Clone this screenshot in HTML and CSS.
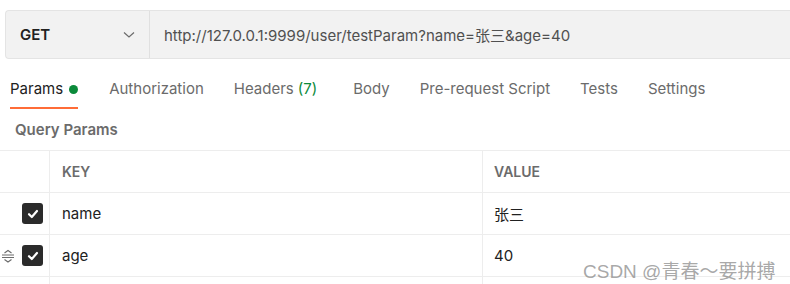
FILE: index.html
```html
<!DOCTYPE html>
<html>
<head>
<meta charset="utf-8">
<link rel="stylesheet" href="styles.css">
</head>
<body>
<div class="page">
  <div class="urlbar">
    <div class="method">
      <span class="method-name">GET</span>
      <svg class="chev" width="12" height="8" viewBox="0 0 12 8"><path d="M1 1.5 L6 6 L11 1.5" fill="none" stroke="#6b6b6b" stroke-width="1.2"/></svg>
    </div>
    <div class="url">http://127.0.0.1:9999/user/testParam?name=张三&amp;age=40</div>
  </div>

  <div class="tabs">
    <div class="tab active">Params <span class="dot"></span></div>
    <div class="tab">Authorization</div>
    <div class="tab wide">Headers <span class="count">(7)</span></div>
    <div class="tab">Body</div>
    <div class="tab">Pre-request Script</div>
    <div class="tab">Tests</div>
    <div class="tab">Settings</div>
  </div>

  <div class="section-title">Query Params</div>

  <div class="table">
    <div class="row head">
      <div class="c-check"></div>
      <div class="c-key">KEY</div>
      <div class="c-val">VALUE</div>
    </div>
    <div class="row">
      <div class="c-check"><span class="cb"><svg width="14" height="14" viewBox="0 0 14 14"><path d="M3 7.2 L5.8 10 L11 4" fill="none" stroke="#fff" stroke-width="2.2" stroke-linecap="round" stroke-linejoin="round"/></svg></span></div>
      <div class="c-key">name</div>
      <div class="c-val">张三</div>
    </div>
    <div class="row">
      <div class="c-check">
        <svg class="drag" width="14" height="14" viewBox="0 0 14 14"><path d="M3.5 4 L7 1.5 L10.5 4 M1 6 H13 M1 8.5 H13 M3.5 10.5 L7 13 L10.5 10.5" fill="none" stroke="#6b6b6b" stroke-width="1.1"/></svg>
        <span class="cb"><svg width="14" height="14" viewBox="0 0 14 14"><path d="M3 7.2 L5.8 10 L11 4" fill="none" stroke="#fff" stroke-width="2.2" stroke-linecap="round" stroke-linejoin="round"/></svg></span>
      </div>
      <div class="c-key">age</div>
      <div class="c-val">40</div>
    </div>
    <div class="row empty">
      <div class="c-check"></div>
      <div class="c-key"></div>
      <div class="c-val"></div>
    </div>
  </div>

  <div class="watermark">CSDN @青春～要拼搏</div>
</div>
</body>
</html>
```
FILE: styles.css
```css
html, body {
  margin: 0;
  padding: 0;
  background: #ffffff;
}
body {
  font-family: Inter, "Noto Sans CJK SC", sans-serif;
  font-size: 15px;
  color: #212121;
  width: 790px;
  height: 284px;
  overflow: hidden;
}
.page {
  position: relative;
  height: 284px;
}
.urlbar {
  display: flex;
  margin: 10px 0 0 5px;
  height: 47px;
  background: #f2f2f2;
  border: 1px solid #e4e4e4;
  border-right: none;
  border-radius: 4px 0 0 4px;
}
.method {
  width: 144px;
  box-sizing: border-box;
  display: flex;
  align-items: center;
  padding: 0 14px 0 14px;
  border-right: 1px solid #e0e0e0;
}
.method-name {
  font-weight: 600;
  font-size: 15px;
  color: #212121;
  flex: 1;
}
.url {
  display: flex;
  align-items: center;
  padding-left: 14px;
  color: #505050;
  font-size: 15px;
}
.tabs {
  display: flex;
  margin-top: 20px;
  padding-left: 10px;
  height: 30px;
}
.tab {
  color: #6b6b6b;
  margin-right: 30px;
  height: 30px;
  box-sizing: border-box;
  display: flex;
  align-items: flex-start;
}
.tab.wide { margin-right: 36px; }
.tab.active {
  color: #212121;
  border-bottom: 2px solid #ff6c37;
  margin-right: 31px;
}
.dot {
  display: inline-block;
  width: 9px;
  height: 9px;
  background: #0b8a3a;
  border-radius: 50%;
  margin: 6px 0 0 6px;
}
.count {
  color: #0b8a3a;
  margin-left: 4px;
}
.section-title {
  margin: 11px 0 0 15px;
  font-weight: 600;
  color: #6b6b6b;
  height: 20px;
}
.table {
  margin-top: 10px;
  border-top: 1px solid #ededed;
}
.row {
  display: flex;
  height: 41px;
  border-bottom: 1px solid #ededed;
}
.row.empty {
  border-bottom: none;
}
.c-check {
  width: 50px;
  box-sizing: border-box;
  border-right: 1px solid #ededed;
  display: flex;
  align-items: center;
  justify-content: flex-end;
  padding-right: 6px;
  position: relative;
}
.c-key {
  width: 433px;
  box-sizing: border-box;
  border-right: 1px solid #ededed;
  padding-left: 12px;
  display: flex;
  align-items: center;
  color: #212121;
}
.c-val {
  flex: 1;
  padding-left: 11px;
  display: flex;
  align-items: center;
  color: #212121;
}
.row.head .c-key, .row.head .c-val {
  font-weight: 600;
  font-size: 14px;
  color: #6b6b6b;
}
.cb {
  width: 21px;
  height: 21px;
  border-radius: 3px;
  background: #2b2b2b;
  display: flex;
  align-items: center;
  justify-content: center;
}
.drag {
  position: absolute;
  left: 1px;
  top: 14px;
}
.watermark {
  position: absolute;
  left: 583px;
  top: 250px;
  font-family: "Liberation Sans", "Noto Sans CJK SC", sans-serif;
  font-size: 19px;
  line-height: 24px;
  color: rgba(130, 130, 130, 0.7);
  white-space: nowrap;
}
```
